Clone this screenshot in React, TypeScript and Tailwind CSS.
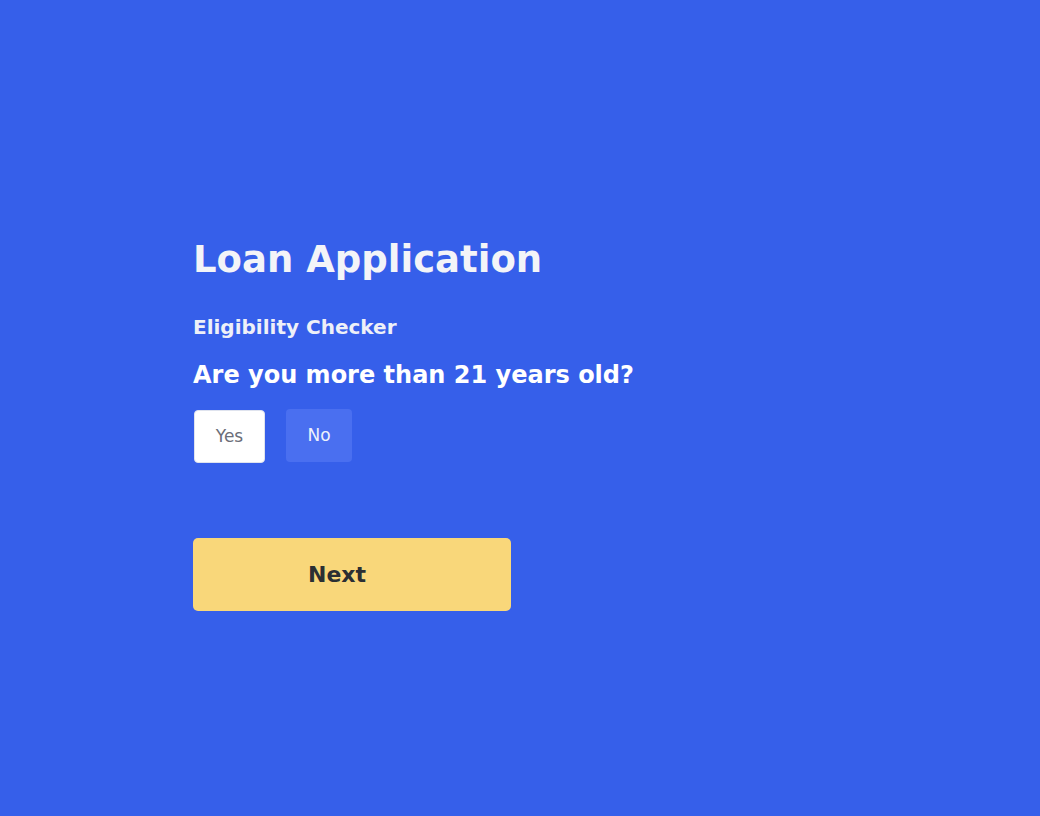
export default function App() {
  return (
    <div className="min-h-screen w-full bg-[#365fea] font-['DejaVu_Sans',sans-serif] pl-[193px] pt-[237px]">
      <h1 className="text-[37px] leading-[46px] font-bold text-[#f3f4f8]">Loan Application</h1>
      <p className="mt-[32px] text-[20px] leading-[24px] font-bold text-[#eef0f8]">Eligibility Checker</p>
      <p className="mt-[21px] text-[24px] leading-[30px] font-bold text-white">Are you more than 21 years old?</p>
      <div className="mt-[20px] flex items-center gap-[21px]">
        <button className="ml-px w-[71px] h-[53px] rounded-[4px] bg-white border border-[#dfe3ee] text-[17px] text-[#6b6e78]">Yes</button>
        <button className="w-[66px] h-[53px] rounded-[4px] bg-[#4a6ff0] text-[17px] text-[#eef1fb] -mt-[2px]">No</button>
      </div>
      <button className="mt-[75px] w-[318px] h-[73px] rounded-[5px] bg-[#f9d77a] pr-[30px] text-[22px] font-bold text-[#2b2f33]">Next</button>
    </div>
  )
}
